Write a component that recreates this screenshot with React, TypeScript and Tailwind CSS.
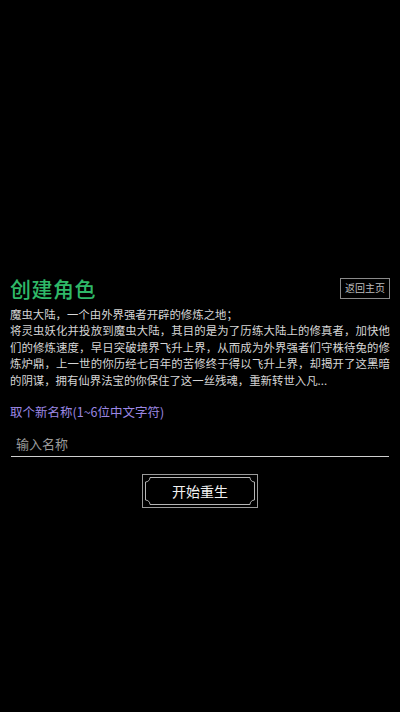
import React from "react";

const intro = [
  { text: "魔虫大陆，一个由外界强者开辟的修炼之地；", full: false },
  { text: "将灵虫妖化并投放到魔虫大陆，其目的是为了历练大陆上的修真者，加快他", full: true },
  { text: "们的修炼速度，早日突破境界飞升上界，从而成为外界强者们守株待兔的修", full: true },
  { text: "炼炉鼎，上一世的你历经七百年的苦修终于得以飞升上界，却揭开了这黑暗", full: true },
  { text: "的阴谋，拥有仙界法宝的你保住了这一丝残魂，重新转世入凡...", full: false },
];

function FrameButton({ label }: { label: string }) {
  return (
    <button className="relative mx-auto flex h-[34px] w-[116px] items-center justify-center border border-[#9a9a9a] bg-black">
      <svg className="pointer-events-none absolute inset-0" width="114" height="32" viewBox="0 0 114 32" fill="none">
        <path
          d="M7 2.5 H107 A4.5 4.5 0 0 0 111.5 7 V25 A4.5 4.5 0 0 0 107 29.5 H7 A4.5 4.5 0 0 0 2.5 25 V7 A4.5 4.5 0 0 0 7 2.5 Z"
          stroke="#b5b5b5"
          strokeWidth="1"
        />
      </svg>
      <span className="relative text-[14px] leading-none text-[#f2f2f2]">{label}</span>
    </button>
  );
}

export default function App() {
  return (
    <div
      className="flex min-h-[712px] w-[400px] flex-col bg-black pt-[274px]"
      style={{ fontFamily: '"Noto Sans CJK SC", "Noto Sans", sans-serif' }}
    >
      <div className="flex h-[28px] items-center justify-between pl-[10px] pr-[10px]">
        <h1 className="text-[21px] leading-[28px] font-medium tracking-[0.5px] text-[#2fb868]">创建角色</h1>
        <button className="flex h-[21px] w-[50px] items-center justify-center border border-[#8a8a8a] text-[10px] leading-none text-[#bdbdbd]">
          返回主页
        </button>
      </div>

      <div className="mt-[4px] px-[10px] text-[11.4px] leading-[16.4px] text-[#d6d6d6]">
        {intro.map((line) => (
          <div
            key={line.text}
            className={
              line.full
                ? "whitespace-nowrap text-justify [text-align-last:justify] [text-justify:inter-character]"
                : "whitespace-nowrap"
            }
          >
            {line.text}
          </div>
        ))}
      </div>

      <div className="mt-[15px] px-[10px] text-[12.5px] leading-[18px] text-[#9c88e4]">取个新名称(1~6位中文字符)</div>

      <div className="mx-[11px] mt-[11px] flex h-[25px] items-center border-b border-[#cfcfcf] pl-[5px]">
        <input
          className="w-full bg-transparent text-[13px] leading-[20px] text-[#eeeeee] outline-none placeholder:text-[#9a9a9a]"
          placeholder="输入名称"
        />
      </div>

      <div className="mt-[17px] flex">
        <FrameButton label="开始重生" />
      </div>
    </div>
  );
}
